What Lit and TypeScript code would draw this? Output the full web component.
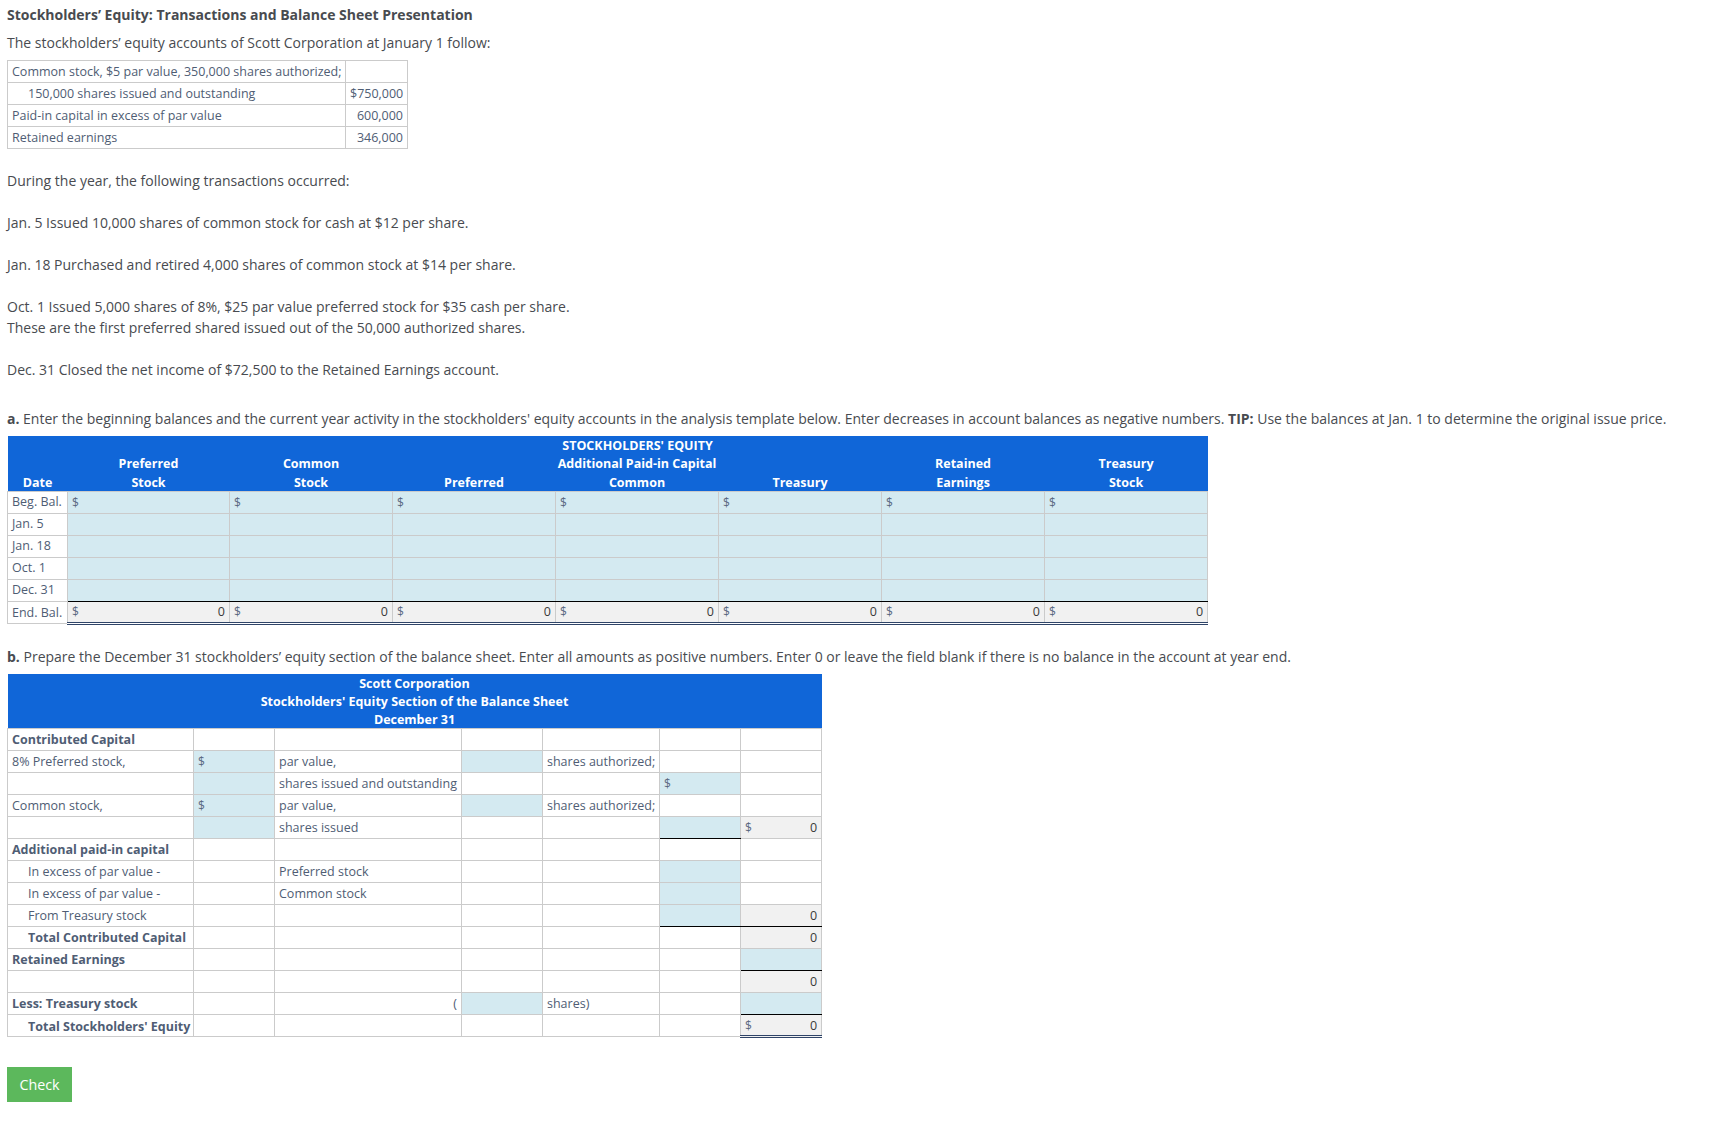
import { LitElement, html, css, nothing } from 'lit';
import { customElement } from 'lit/decorators.js';

// cell spec: text + flags, kept short since the tables are mostly blank cells
type Cell = {
  t?: string;
  k?: string; // extra classes
  d?: boolean; // dollar sign on the left
  z?: boolean; // computed zero on the right
};

const I = (k = ''): Cell => ({ k: `inp ${k}` });
const ID = (k = ''): Cell => ({ k: `inp ${k}`, d: true });
const Z = (k = ''): Cell => ({ k: `calc ${k}`, z: true });
const E: Cell = {};

const sheetRows: Cell[][] = [
  [{ t: 'Contributed Capital', k: 'b' }, E, E, E, E, E, E],
  [{ t: '8% Preferred stock,' }, ID(), { t: 'par value,' }, I(), { t: 'shares authorized;' }, E, E],
  [E, I(), { t: 'shares issued and outstanding' }, E, E, ID(), E],
  [{ t: 'Common stock,' }, ID(), { t: 'par value,' }, I(), { t: 'shares authorized;' }, E, E],
  [E, I(), { t: 'shares issued' }, E, E, I('ul'), { k: 'calc', d: true, z: true }],
  [{ t: 'Additional paid-in capital', k: 'b' }, E, E, E, E, E, E],
  [{ t: 'In excess of par value -', k: 'ind' }, E, { t: 'Preferred stock' }, E, E, I(), E],
  [{ t: 'In excess of par value -', k: 'ind' }, E, { t: 'Common stock' }, E, E, I(), E],
  [{ t: 'From Treasury stock', k: 'ind' }, E, E, E, E, I('ul'), Z('ul')],
  [{ t: 'Total Contributed Capital', k: 'b ind' }, E, E, E, E, E, Z()],
  [{ t: 'Retained Earnings', k: 'b' }, E, E, E, E, E, I('ul')],
  [E, E, E, E, E, E, Z()],
  [{ t: 'Less: Treasury stock', k: 'b' }, E, { t: '(', k: 'r' }, I(), { t: 'shares)' }, E, I('ul')],
  [{ t: "Total Stockholders' Equity", k: 'b ind low' }, E, E, E, E, E, { k: 'calc dbl', d: true, z: true }],
];

const activityDates = ['Jan. 5', 'Jan. 18', 'Oct. 1', 'Dec. 31'];

@customElement('app-root')
export class AppRoot extends LitElement {
  static styles = css`
    :host {
      display: block;
      padding: 4px 0 0 7px;
      font-family: 'Open Sans', sans-serif;
      font-size: 14px;
      line-height: 21px;
      color: #484b50;
      background: #fff;
      min-height: 1124px;
    }
    p {
      margin: 0;
    }
    .title {
      font-weight: 700;
      margin-bottom: 7px;
    }
    .intro {
      margin-bottom: 7px;
    }
    .gap {
      margin-bottom: 21px;
    }
    .pa {
      margin: 28px 0 7px;
      white-space: nowrap;
    }
    .pb {
      margin: 21px 0 7px;
      white-space: nowrap;
    }
    table {
      border-collapse: collapse;
      table-layout: fixed;
      font-size: 12.5px;
      line-height: 18px;
      color: #4f5d74;
    }
    td,
    th {
      height: 22px;
      padding: 0 4px;
      box-sizing: border-box;
      border: 1px solid #cbcbcb;
      white-space: nowrap;
      overflow: visible;
      font-weight: 400;
    }
    .balances {
      width: 400px;
      margin-bottom: 21px;
    }
    .activity {
      width: 1200px;
    }
    .sheet {
      width: 814px;
    }
    th {
      height: 18.33px;
      padding: 2px 0 0;
      border: none;
      background: #1066d8;
      color: #fff;
      font-weight: 700;
      line-height: 16px;
      text-align: center;
      vertical-align: bottom;
    }
    .activity .mid th {
      padding-top: 0;
      line-height: 18px;
    }
    .activity .low-head th {
      padding-top: 1px;
      line-height: 17px;
    }
    .r {
      text-align: right;
    }
    .b {
      font-weight: 700;
    }
    .ind {
      padding-left: 20px;
    }
    .low {
      padding-top: 2px;
    }
    .inp {
      background: #d4eaf1;
    }
    .calc {
      background: #f1f1f1;
    }
    .ul {
      border-bottom: 1px solid #000;
    }
    .dbl {
      border-bottom: 3px double #2f4468;
    }
    .amt {
      display: flex;
      justify-content: space-between;
      align-items: center;
      padding-top: 1px;
    }
    .dollar {
      font-size: 12px;
      color: #5a6880;
    }
    .zero {
      margin-left: auto;
      color: #3a3a3a;
    }
    .check {
      display: block;
      width: 65px;
      height: 35px;
      margin-top: 29px;
      padding: 0;
      border: none;
      background: #5cb85c;
      color: #fff;
      font: inherit;
      font-size: 14.3px;
    }
  `;

  cell(c: Cell) {
    return html`<td class=${c.k ?? ''}>
      ${c.d || c.z
        ? html`<div class="amt">
            ${c.d ? html`<span class="dollar">$</span>` : nothing}
            ${c.z ? html`<span class="zero">0</span>` : nothing}
          </div>`
        : c.t ?? nothing}
    </td>`;
  }

  render() {
    const cols = [0, 1, 2, 3, 4, 5, 6];
    return html`
      <p class="title">Stockholders’ Equity: Transactions and Balance Sheet Presentation</p>
      <p class="intro">The stockholders’ equity accounts of Scott Corporation at January 1 follow:</p>
      <table class="balances">
        <colgroup><col style="width:338px" /><col style="width:62px" /></colgroup>
        <tr><td>Common stock, $5 par value, 350,000 shares authorized;</td><td></td></tr>
        <tr><td class="ind">150,000 shares issued and outstanding</td><td class="r">$750,000</td></tr>
        <tr><td>Paid-in capital in excess of par value</td><td class="r">600,000</td></tr>
        <tr><td>Retained earnings</td><td class="r">346,000</td></tr>
      </table>
      <p class="gap">During the year, the following transactions occurred:</p>
      <p class="gap">Jan. 5 Issued 10,000 shares of common stock for cash at $12 per share.</p>
      <p class="gap">Jan. 18 Purchased and retired 4,000 shares of common stock at $14 per share.</p>
      <p>Oct. 1 Issued 5,000 shares of 8%, $25 par value preferred stock for $35 cash per share.</p>
      <p class="gap">These are the first preferred shared issued out of the 50,000 authorized shares.</p>
      <p>Dec. 31 Closed the net income of $72,500 to the Retained Earnings account.</p>
      <p class="pa">
        <b>a.</b> Enter the beginning balances and the current year activity in the stockholders' equity accounts in
        the analysis template below. Enter decreases in account balances as negative numbers. <b>TIP:</b> Use the
        balances at Jan. 1 to determine the original issue price.
      </p>
      <table class="activity">
        <colgroup>
          <col style="width:60px" />
          ${cols.map((i) => html`<col style="width:${i === 0 ? 162 : 163}px" />`)}
        </colgroup>
        <tr><th></th><th colspan="7">STOCKHOLDERS' EQUITY</th></tr>
        <tr class="mid">
          <th></th><th>Preferred</th><th>Common</th><th colspan="3">Additional Paid-in Capital</th>
          <th>Retained</th><th>Treasury</th>
        </tr>
        <tr class="low-head">
          <th>Date</th><th>Stock</th><th>Stock</th><th>Preferred</th><th>Common</th><th>Treasury</th>
          <th>Earnings</th><th>Stock</th>
        </tr>
        <tr><td>Beg. Bal.</td>${cols.map(() => this.cell(ID()))}</tr>
        ${activityDates.map(
          (d, i) => html`<tr><td>${d}</td>${cols.map(() => this.cell(I(i === 3 ? 'ul' : '')))}</tr>`
        )}
        <tr>
          <td class="low">End. Bal.</td>
          ${cols.map(() => this.cell({ k: 'calc dbl', d: true, z: true }))}
        </tr>
      </table>
      <p class="pb">
        <b>b.</b> Prepare the December 31 stockholders’ equity section of the balance sheet. Enter all amounts as
        positive numbers. Enter 0 or leave the field blank if there is no balance in the account at year end.
      </p>
      <table class="sheet">
        <colgroup>
          <col style="width:186px" /><col style="width:81px" /><col style="width:187px" /><col style="width:81px" />
          <col style="width:117px" /><col style="width:81px" /><col style="width:81px" />
        </colgroup>
        <tr><th colspan="7">Scott Corporation</th></tr>
        <tr><th colspan="7">Stockholders' Equity Section of the Balance Sheet</th></tr>
        <tr><th colspan="7">December 31</th></tr>
        ${sheetRows.map((r) => html`<tr>${r.map((c) => this.cell(c))}</tr>`)}
      </table>
      <button class="check">Check</button>
    `;
  }
}
